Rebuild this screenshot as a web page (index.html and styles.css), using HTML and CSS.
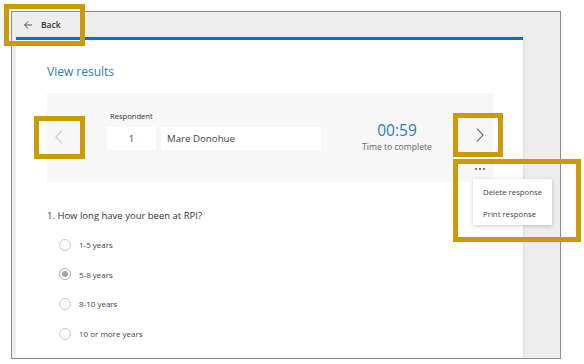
FILE: index.html
```html
<!DOCTYPE html>
<html>
<head>
    <title>View results</title>
    <link rel="stylesheet" href="styles.css">
</head>
<body>
    <div class="frame">
        <div class="topbar">
            <svg class="back-arrow" width="8" height="8" viewBox="0 0 8 8">
                <path d="M4 0.5 L0.6 4 L4 7.5 M0.6 4 H8" fill="none" stroke="#444" stroke-width="0.9"/>
            </svg>
            <span class="back-text">Back</span>
        </div>

        <div class="card">
            <h2 class="title">View results</h2>

            <div class="panel">
                <div class="nav prev">
                    <svg width="8" height="14" viewBox="0 0 8 14">
                        <path d="M7 0.5 L1 7 L7 13.5" fill="none" stroke="#c4c4c4" stroke-width="1.1"/>
                    </svg>
                </div>
                <div class="respondent">
                    <div class="label">Respondent</div>
                    <div class="fields">
                        <div class="field num">1</div>
                        <div class="field name">Mare Donohue</div>
                    </div>
                </div>
                <div class="timer">
                    <div class="time">00:59</div>
                    <div class="time-label">Time to complete</div>
                </div>
                <div class="side">
                    <div class="nav next">
                        <svg width="8" height="14" viewBox="0 0 8 14">
                            <path d="M1 0.5 L7 7 L1 13.5" fill="none" stroke="#555" stroke-width="1.1"/>
                        </svg>
                    </div>
                    <div class="more">
                        <span class="dot"></span><span class="dot"></span><span class="dot"></span>
                    </div>
                </div>
            </div>

            <div class="question">1. How long have your been at RPI?</div>
            <ul class="options">
                <li><span class="radio"></span>1-5 years</li>
                <li><span class="radio checked"></span>5-8 years</li>
                <li><span class="radio"></span>8-10 years</li>
                <li><span class="radio"></span>10 or more years</li>
            </ul>
        </div>

        <!-- メニュー -->
        <div class="menu">
            <div class="menu-item">Delete response</div>
            <div class="menu-item">Print response</div>
        </div>
    </div>

    <!-- 注釈の枠 -->
    <div class="mark mark-back"></div>
    <div class="mark mark-prev"></div>
    <div class="mark mark-next"></div>
    <div class="mark mark-menu"></div>
</body>
</html>
```

FILE: styles.css
```css
/* 全体 */
body {
    margin: 0;
    background: #ffffff;
    font-family: "Open Sans", "Noto Sans", sans-serif;
    color: #333;
}

.frame {
    position: relative;
    margin: 11px 0 0 11px;
    width: 548px;
    height: 346px;
    border: 1px solid #8c8c8c;
    background: #ededed;
    display: flex;
    flex-direction: column;
}

.topbar {
    height: 25px;
    display: flex;
    align-items: center;
    padding-left: 12px;
}

.back-arrow {
    margin-right: 9px;
}

.back-text {
    font-size: 8.5px;
    font-weight: 600;
    color: #333;
}

.card {
    flex: 1;
    margin-left: 4px;
    width: 507px;
    background: #ffffff;
    border-top: 3px solid #106ebe;
    box-shadow: 1px 0 2px rgba(0, 0, 0, 0.08);
    padding-left: 31px;
    box-sizing: border-box;
}

.title {
    margin: 23px 0 0 0;
    font-size: 12px;
    line-height: 17px;
    font-weight: 400;
    color: #2b7cc4;
}

/* 回答者パネル */
.panel {
    margin-top: 13px;
    width: 446px;
    height: 89px;
    background: #f7f7f7;
    display: flex;
    align-items: flex-start;
}

.nav {
    display: flex;
    align-items: center;
    justify-content: center;
    width: 24px;
    height: 24px;
}

.prev {
    margin-top: 32px;
}

.respondent {
    margin-left: 36px;
    padding-top: 17px;
}

.label {
    font-size: 7.6px;
    line-height: 12px;
    color: #333;
    margin-bottom: 5px;
    padding-left: 3px;
}

.fields {
    display: flex;
    gap: 5px;
}

.field {
    height: 23px;
    background: #ffffff;
    font-size: 9.7px;
    line-height: 23px;
    color: #444;
}

.num {
    width: 49px;
    text-align: center;
}

.name {
    width: 154px;
    padding-left: 6px;
}

.timer {
    margin-left: 31px;
    width: 90px;
    padding-top: 27px;
    text-align: center;
    white-space: nowrap;
}

.time {
    font-size: 15.5px;
    line-height: 20px;
    color: #2b7cc4;
}

.time-label {
    font-size: 8.6px;
    line-height: 12px;
    color: #666;
    margin-top: 1px;
}

.side {
    margin-left: 26px;
    padding-top: 30px;
    display: flex;
    flex-direction: column;
    align-items: center;
}

.more {
    margin-top: 21px;
    display: flex;
    gap: 2px;
}

.dot {
    width: 2px;
    height: 2px;
    border-radius: 50%;
    background: #555;
}

/* 質問 */
.question {
    margin-top: 26px;
    font-size: 9.5px;
    line-height: 16px;
    color: #333;
}

.options {
    list-style: none;
    margin: 6px 0 0 0;
    padding: 0 0 0 12px;
}

.options li {
    display: flex;
    align-items: center;
    height: 29.6px;
    font-size: 8px;
    color: #444;
}

.radio {
    width: 12px;
    height: 12px;
    border: 1px solid #c8c8c8;
    border-radius: 50%;
    background: #ffffff;
    box-sizing: border-box;
    margin-right: 8px;
    position: relative;
}

.radio.checked {
    border-color: #b0b0b0;
}

.radio.checked::after {
    content: "";
    position: absolute;
    left: 2px;
    top: 2px;
    width: 6px;
    height: 6px;
    border-radius: 50%;
    background: #a6a6a6;
}

/* ドロップダウン */
.menu {
    position: absolute;
    left: 461px;
    top: 167px;
    width: 79px;
    padding: 4px 0 2px;
    background: #ffffff;
    box-shadow: 0 1px 4px rgba(0, 0, 0, 0.2);
}

.menu-item {
    height: 18px;
    line-height: 18px;
    padding-left: 10px;
    font-size: 7.8px;
    color: #444;
    margin-bottom: 4px;
}

.menu-item:last-child {
    margin-bottom: 0;
}

/* 注釈 */
.mark {
    position: absolute;
    border: 5px solid #cc9a06;
    box-sizing: border-box;
}

.mark-back {
    left: 4px;
    top: 4px;
    width: 81px;
    height: 42px;
}

.mark-prev {
    left: 34px;
    top: 116px;
    width: 51px;
    height: 43px;
}

.mark-next {
    left: 453px;
    top: 113px;
    width: 50px;
    height: 44px;
}

.mark-menu {
    left: 453px;
    top: 159px;
    width: 128px;
    height: 83px;
}
```
